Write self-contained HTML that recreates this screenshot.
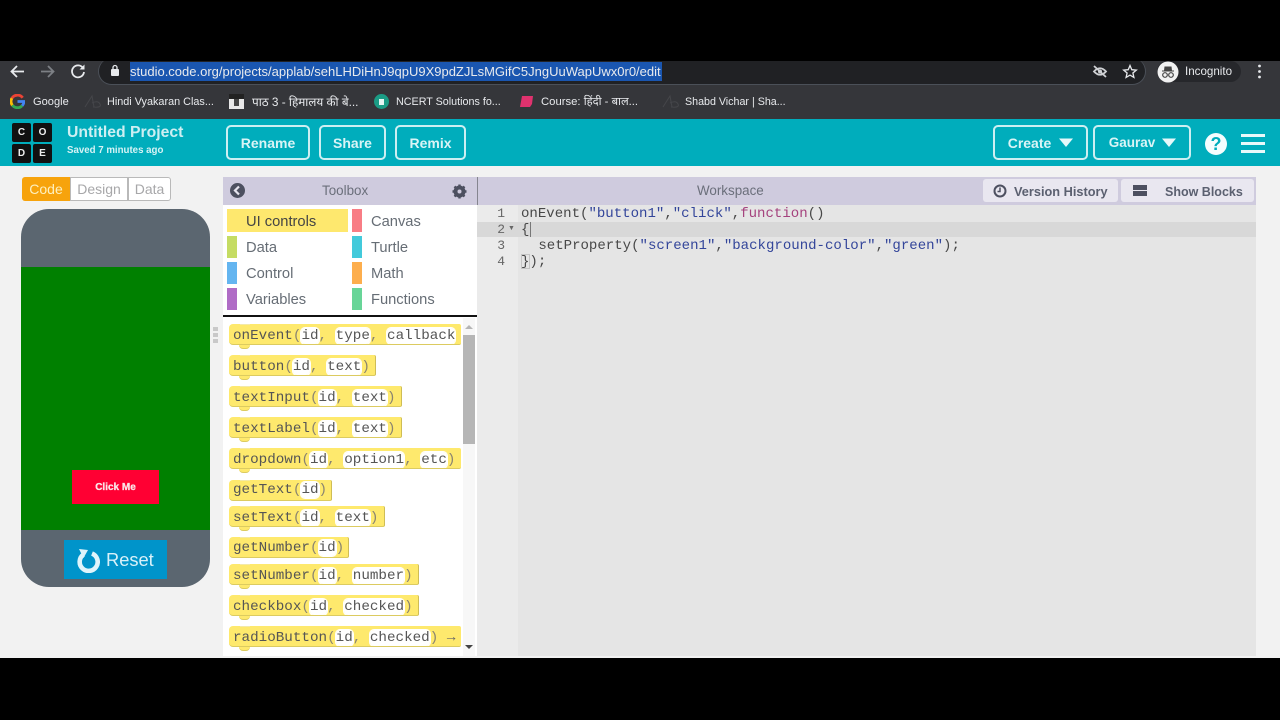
<!DOCTYPE html>
<html><head><meta charset="utf-8"><style>
html,body{margin:0;padding:0;width:1280px;height:720px;overflow:hidden;background:#000;font-family:"Liberation Sans",sans-serif}
.a,.t{position:absolute;white-space:nowrap}
.t{line-height:18px;height:18px}
.bm{color:#e8eaed;font-size:10.800px;top:93px}
.btn{position:absolute;box-sizing:border-box;top:125px;height:35px;border:2px solid #cdeff2;border-radius:5px;color:#d9f4f6;font-weight:bold;font-size:14px;line-height:32px;text-align:center}
.cat{position:absolute;width:10px;height:22px}
.cl{position:absolute;font-size:14.700px;color:#666d75;line-height:22px;white-space:nowrap}
.b{position:absolute;left:229px;box-sizing:border-box;background:#fee96d;height:21px;border-radius:4px 2px 2px 4px;border-right:1.500px solid #cfbd55;border-bottom:1.500px solid #dccb60;font:14.250px/25px "Liberation Mono",monospace;color:#555;padding-left:4px;white-space:nowrap;overflow:hidden}
.b::before{content:"";position:absolute;left:11px;top:0;width:10px;height:1px;background:#f3e9a8}
.n{position:absolute;left:239px;width:11px;height:3px;background:#fee96d;border-bottom:1px solid #dccb60;border-radius:0 0 4px 4px}
.b i{font-style:normal;background:#fff;border-radius:4px;box-shadow:0 0 0 1px #fff}
.b u{text-decoration:none;color:#8a8470}
.ln{position:absolute;left:477px;width:28px;text-align:right;font:13px/16px "Liberation Mono",monospace;color:#666}
.c{position:absolute;left:521px;font:14.050px/16px "Liberation Mono",monospace;color:#484848;white-space:pre}
.s{color:#33459a}.k{color:#a5437e}
</style></head><body>
<div class="a" style="left:0;top:61px;width:1280px;height:58px;background:#35363a"></div>
<div class="a" style="left:98px;top:58px;width:1048px;height:27px;background:#202124;border-radius:14px;border:1px solid #4b5058;box-sizing:border-box;border-top:0"></div>
<div class="a" style="left:0;top:0;width:1280px;height:61px;background:#000"></div>
<svg class="a" style="left:0;top:61px" width="130" height="24" viewBox="0 0 130 24" fill="none">
<path d="M24 10.500H12M17 5L11.500 10.500L17 16" stroke="#e8eaed" stroke-width="1.800"/>
<path d="M41 10.500H53M48 5L53.500 10.500L48 16" stroke="#7d8085" stroke-width="1.800"/>
<path d="M83 7A6 6 0 1 0 84 11" stroke="#e8eaed" stroke-width="1.800"/><path d="M84.500 3.500V8.500H79.500Z" fill="#e8eaed"/>
<rect x="111" y="8" width="8" height="7" rx="1" fill="#e8eaed"/><path d="M113 8V6.500A2 2 0 0 1 117 6.500V8" stroke="#e8eaed" stroke-width="1.300"/>
</svg>
<div class="a" style="left:130px;top:62px;width:532px;height:19px;background:#1a56b0"></div>
<div class="t" style="left:130px;top:62.500px;font-size:13.010px;color:#e8eaed">studio.code.org/projects/applab/sehLHDiHnJ9qpU9X9pdZJLsMGifC5JngUuWapUwx0r0/edit</div>
<svg class="a" style="left:1090px;top:61px" width="180" height="24" viewBox="0 0 180 24" fill="none">
<path d="M4 10.500Q10 4 16 10.500Q10 17 4 10.500Z" stroke="#cfd1d4" stroke-width="1.800"/><circle cx="10" cy="10.500" r="2" fill="#cfd1d4"/><path d="M4 5L16 16" stroke="#cfd1d4" stroke-width="1.800"/>
<path d="M40 4.500L41.800 8.700L46.300 9.100L42.900 12L43.900 16.400L40 14.100L36.100 16.400L37.100 12L33.700 9.100L38.200 8.700Z" stroke="#e8eaed" stroke-width="1.300"/>
<circle cx="169.500" cy="5" r="1.400" fill="#e8eaed"/><circle cx="169.500" cy="10.500" r="1.400" fill="#e8eaed"/><circle cx="169.500" cy="16" r="1.400" fill="#e8eaed"/>
</svg>
<div class="a" style="left:1157px;top:61px;width:84px;height:21px;background:#26272b;border-radius:11px"></div>
<svg class="a" style="left:1157px;top:61px" width="22" height="22" viewBox="0 0 22 22"><circle cx="11" cy="11" r="10.500" fill="#f1f1f1"/><path d="M5 9.500H17V10.500H5ZM7.500 5.500H14.500L15 9.500H7Z" fill="#444"/><circle cx="8" cy="14" r="2.300" fill="none" stroke="#444" stroke-width="1.200"/><circle cx="14" cy="14" r="2.300" fill="none" stroke="#444" stroke-width="1.200"/></svg>
<div class="t" style="left:1185px;top:63px;font-size:11.600px;color:#e8eaed">Incognito</div>

<svg class="a" style="left:10px;top:94px" width="15" height="15" viewBox="0 0 16 16" fill="none" stroke-width="3"><path d="M13.500 4A7 7 0 0 0 2 4.500" stroke="#ea4335"/><path d="M2 4.500A7 7 0 0 0 2.500 12" stroke="#fbbc05"/><path d="M2.500 12A7 7 0 0 0 13 12.500" stroke="#34a853"/><path d="M13 12.500A7 7 0 0 0 14.800 8H8" stroke="#4285f4"/></svg>
<div class="t bm" style="left:33px;font-size:11.100px">Google</div>
<svg class="a" style="left:84px;top:94px" width="18" height="15" fill="none" stroke="#45464a" stroke-width="1"><path d="M1 13L8 2L10 13M8 9Q14 6 16 10T9 13"/></svg>
<div class="t bm" style="left:107px;font-size:10.850px">Hindi Vyakaran Clas...</div>
<div class="a" style="left:229px;top:94px;width:15px;height:15px;background:#e8e8e8"></div>
<div class="a" style="left:229px;top:94px;width:15px;height:5px;background:#222"></div>
<div class="a" style="left:234px;top:99px;width:5px;height:7px;background:#444"></div>
<div class="t bm" style="left:252px;font-size:11.800px;font-family:'Liberation Sans','DejaVu Sans',sans-serif">पाठ 3 - हिमालय की बे...</div>
<div class="a" style="left:374px;top:94px;width:15px;height:15px;border-radius:50%;background:#1b9c85"></div>
<div class="a" style="left:379px;top:99px;width:5px;height:6px;background:#e6f5f2"></div>
<div class="t bm" style="left:396px;font-size:10.750px">NCERT Solutions fo...</div>
<svg class="a" style="left:519px;top:95px" width="15" height="13"><path d="M3 1H14L13 9L11 12H1Z" fill="#e0326e"/></svg>
<div class="t bm" style="left:541px;font-size:11.300px">Course: हिंदी - बाल...</div>
<svg class="a" style="left:662px;top:94px" width="18" height="15" fill="none" stroke="#45464a" stroke-width="1"><path d="M1 13L8 2L10 13M8 9Q14 6 16 10T9 13"/></svg>
<div class="t bm" style="left:685px;font-size:10.700px">Shabd Vichar | Sha...</div>

<div class="a" style="left:0;top:119px;width:1280px;height:47px;background:#00adbc"></div>
<div class="a" style="left:12px;top:123px;width:19px;height:19px;background:#111;border-radius:2px;color:#eee;font-size:10px;font-weight:bold;line-height:19px;text-align:center">C</div>
<div class="a" style="left:33px;top:123px;width:19px;height:19px;background:#111;border-radius:2px;color:#eee;font-size:10px;font-weight:bold;line-height:19px;text-align:center">O</div>
<div class="a" style="left:12px;top:144px;width:19px;height:19px;background:#111;border-radius:2px;color:#eee;font-size:10px;font-weight:bold;line-height:19px;text-align:center">D</div>
<div class="a" style="left:33px;top:144px;width:19px;height:19px;background:#111;border-radius:2px;color:#eee;font-size:10px;font-weight:bold;line-height:19px;text-align:center">E</div>
<div class="t" style="left:67px;top:124px;font-size:15.750px;font-weight:bold;color:#cdeff2">Untitled Project</div>
<div class="t" style="left:67px;top:142px;font-size:9.700px;font-weight:bold;color:#d6f3f5">Saved 7 minutes ago</div>
<div class="btn" style="left:226px;width:84px">Rename</div>
<div class="btn" style="left:319px;width:67px">Share</div>
<div class="btn" style="left:395px;width:71px">Remix</div>
<div class="btn" style="left:993px;width:95px;padding-right:22px">Create</div>
<svg class="a" style="left:1058px;top:138px" width="16" height="10"><path d="M1 0.500H15L8 9Z" fill="#e6f8fa"/></svg>
<div class="btn" style="left:1093px;width:98px;padding-right:20px;font-size:13.500px">Gaurav</div>
<svg class="a" style="left:1161px;top:138px" width="16" height="10"><path d="M1 0.500H15L8 9Z" fill="#e6f8fa"/></svg>
<div class="a" style="left:1205px;top:133px;width:22px;height:22px;border-radius:50%;background:#f4fdfe;color:#00adbc;font-size:18px;font-weight:bold;line-height:22px;text-align:center">?</div>
<div class="a" style="left:1241px;top:134px;width:24px;height:3px;background:#e8f9fa"></div>
<div class="a" style="left:1241px;top:142px;width:24px;height:3px;background:#e8f9fa"></div>
<div class="a" style="left:1241px;top:150px;width:24px;height:3px;background:#e8f9fa"></div>

<div class="a" style="left:0;top:166px;width:1280px;height:492px;background:#f2f2f2"></div>

<div class="a" style="left:22px;top:177px;width:48px;height:24px;background:#f7a30c;border-radius:3px 0 0 3px;color:#fdf0c0;font-size:14px;line-height:24px;text-align:center">Code</div>
<div class="a" style="left:70px;top:177px;width:58px;height:24px;box-sizing:border-box;background:#fff;border:1px solid #b9b9b9;color:#a7a7a9;font-size:14px;line-height:22px;text-align:center">Design</div>
<div class="a" style="left:128px;top:177px;width:43px;height:24px;box-sizing:border-box;background:#fff;border:1px solid #b9b9b9;border-radius:0 3px 3px 0;color:#a7a7a9;font-size:14px;line-height:22px;text-align:center">Data</div>

<div class="a" style="left:21px;top:209px;width:189px;height:378px;background:#5b6670;border-radius:28px"></div>
<div class="a" style="left:21px;top:267px;width:189px;height:263px;background:#008000"></div>
<div class="a" style="left:72px;top:470px;width:87px;height:34px;background:#ff0033;color:#fbe6e8;font:bold 10px/36px 'Liberation Sans',sans-serif;text-align:center;-webkit-text-stroke:.3px #fbe6e8">Click Me</div>
<div class="a" style="left:64px;top:540px;width:103px;height:39px;background:#0094ca"></div>
<svg class="a" style="left:76px;top:547px" width="24" height="26" viewBox="0 0 24 26" fill="none"><path d="M7.500 7.500A9 9 0 1 0 16 6.500" stroke="#dff4fb" stroke-width="4.600"/><path d="M3 2L12 3L7.500 11Z" fill="#dff4fb"/></svg>
<div class="t" style="left:106px;top:549px;line-height:21px;height:21px;font-size:18.300px;color:#d8f1f9">Reset</div>

<div class="a" style="left:223px;top:177px;width:254px;height:28px;background:#cfcbde"></div>
<div class="a" style="left:477px;top:177px;width:779px;height:28px;background:#cfcbde;border-left:1px solid #85858f;box-sizing:border-box"></div>
<svg class="a" style="left:230px;top:183px" width="15" height="15" viewBox="0 0 15 15"><circle cx="7.500" cy="7.500" r="7.500" fill="#4d5060"/><path d="M9 3.500L5 7.500L9 11.500" stroke="#e6e4ee" stroke-width="2.200" fill="none"/></svg>
<div class="t" style="left:322px;top:182px;font-size:13.400px;color:#6b6f7b">Toolbox</div>
<svg class="a" style="left:452px;top:184px" width="15" height="15" viewBox="0 0 15 15"><circle cx="7.500" cy="7.500" r="4.500" fill="none" stroke="#4d5060" stroke-width="3"/><path d="M7.500 0.500V14.500M0.500 7.500H14.500M2.500 2.500L12.500 12.500M12.500 2.500L2.500 12.500" stroke="#4d5060" stroke-width="2.400"/><circle cx="7.500" cy="7.500" r="2" fill="#cfcbde"/></svg>
<div class="t" style="left:697px;top:182px;font-size:13.400px;color:#6b6f7b">Workspace</div>
<div class="a" style="left:983px;top:179px;width:135px;height:23px;background:#e9e7f0;border-radius:3px"></div>
<svg class="a" style="left:993px;top:184px" width="14" height="14" viewBox="0 0 14 14"><circle cx="7" cy="7" r="5.500" fill="none" stroke="#4d5060" stroke-width="2"/><path d="M7 3.500V7.500H4.500" fill="none" stroke="#4d5060" stroke-width="1.500"/></svg>
<div class="t" style="left:1014px;top:182.500px;font-size:12.750px;font-weight:bold;color:#5b6070">Version History</div>
<div class="a" style="left:1121px;top:179px;width:133px;height:23px;background:#e9e7f0;border-radius:3px"></div>
<div class="a" style="left:1133px;top:185px;width:14px;height:5px;background:#4d5060"></div>
<div class="a" style="left:1133px;top:191px;width:14px;height:5px;background:#4d5060"></div>
<div class="t" style="left:1165px;top:182.500px;font-size:12.500px;font-weight:bold;color:#5b6070">Show Blocks</div>

<div class="a" style="left:223px;top:205px;width:254px;height:451px;background:#fff"></div>
<div class="a" style="left:227px;top:209px;width:121px;height:23px;background:#fee86e"></div>
<div class="cl" style="left:246px;top:211px;color:#444">UI controls</div>
<div class="cat" style="left:227px;top:236px;background:#c5dc63"></div><div class="cl" style="left:246px;top:237px">Data</div>
<div class="cat" style="left:227px;top:262px;background:#64b5f0"></div><div class="cl" style="left:246px;top:263px">Control</div>
<div class="cat" style="left:227px;top:288px;background:#b06cc6"></div><div class="cl" style="left:246px;top:289px">Variables</div>
<div class="cat" style="left:352px;top:209px;height:23px;background:#f87d85"></div><div class="cl" style="left:371px;top:211px">Canvas</div>
<div class="cat" style="left:352px;top:236px;background:#43cadb"></div><div class="cl" style="left:371px;top:237px">Turtle</div>
<div class="cat" style="left:352px;top:262px;background:#fdae4d"></div><div class="cl" style="left:371px;top:263px">Math</div>
<div class="cat" style="left:352px;top:288px;background:#68d598"></div><div class="cl" style="left:371px;top:289px">Functions</div>
<div class="a" style="left:223px;top:315px;width:254px;height:2px;background:#111"></div>

<div class="a" style="left:213px;top:327px;width:5px;height:17px;background:repeating-linear-gradient(#c9c9c9 0 4px,transparent 4px 6px)"></div>
<div class="a" style="left:463px;top:318px;width:12px;height:338px;background:#f7f7f7"></div>
<div class="a" style="left:463px;top:335px;width:12px;height:109px;background:#b6b6b6"></div>
<svg class="a" style="left:464px;top:324px" width="10" height="6"><path d="M1 5H9L5 1Z" fill="#b5b5b5"/></svg>
<svg class="a" style="left:464px;top:644px" width="10" height="6"><path d="M1 1H9L5 5Z" fill="#444"/></svg>

<div class="b" style="top:324px;width:232px;border-right:0">onEvent<u>(</u><i>id</i><u>,</u> <i>type</i><u>,</u> <i>callback</i></div><div class="n" style="top:345px"></div>
<div class="b" style="top:355px;width:147px">button<u>(</u><i>id</i><u>,</u> <i>text</i><u>)</u></div><div class="n" style="top:376px"></div>
<div class="b" style="top:386px;width:173px">textInput<u>(</u><i>id</i><u>,</u> <i>text</i><u>)</u></div><div class="n" style="top:407px"></div>
<div class="b" style="top:417px;width:173px">textLabel<u>(</u><i>id</i><u>,</u> <i>text</i><u>)</u></div><div class="n" style="top:438px"></div>
<div class="b" style="top:448px;width:232px;border-right:0">dropdown<u>(</u><i>id</i><u>,</u> <i>option1</i><u>,</u> <i>etc</i><u>)</u></div><div class="n" style="top:469px"></div>
<div class="b" style="top:480px;width:103px;line-height:21px">getText<u>(</u><i>id</i><u>)</u></div>
<div class="b" style="top:506px;width:156px">setText<u>(</u><i>id</i><u>,</u> <i>text</i><u>)</u></div><div class="n" style="top:527px"></div>
<div class="b" style="top:537px;width:120px;line-height:23px">getNumber<u>(</u><i>id</i><u>)</u></div>
<div class="b" style="top:564px;width:190px">setNumber<u>(</u><i>id</i><u>,</u> <i>number</i><u>)</u></div><div class="n" style="top:585px"></div>
<div class="b" style="top:595px;width:190px">checkbox<u>(</u><i>id</i><u>,</u> <i>checked</i><u>)</u></div><div class="n" style="top:616px"></div>
<div class="b" style="top:626px;width:232px;border-right:0">radioButton<u>(</u><i>id</i><u>,</u> <i>checked</i><u>)</u> <u style="color:#666">→</u></div><div class="n" style="top:647px"></div>

<div class="a" style="left:477px;top:205px;width:779px;height:451px;background:#e5e5e5"></div>
<div class="a" style="left:477px;top:205px;width:41px;height:451px;background:#ebebeb"></div>
<div class="a" style="left:477px;top:222px;width:779px;height:15px;background:#d8d8d8"></div>
<div class="ln" style="top:206px">1</div>
<div class="ln" style="top:222px">2</div>
<div class="t" style="left:508px;top:220px;font-size:7px;color:#666">▼</div>
<div class="ln" style="top:238px">3</div>
<div class="ln" style="top:254px">4</div>
<div class="c" style="top:206px">onEvent(<span class="s">"button1"</span>,<span class="s">"click"</span>,<span class="k">function</span>()</div>
<div class="c" style="top:222px">{</div>
<div class="a" style="left:530px;top:222px;width:1px;height:15px;background:#777"></div>
<div class="c" style="top:238px;left:521.500px">  setProperty(<span class="s">"screen1"</span>,<span class="s">"background-color"</span>,<span class="s">"green"</span>);</div>
<div class="c" style="top:254px">});</div>
<div class="a" style="left:521px;top:254px;width:9px;height:15px;border:1px solid #c4c4c4;box-sizing:border-box"></div>

<div class="a" style="left:0;top:658px;width:1280px;height:62px;background:#000"></div>
</body></html>
